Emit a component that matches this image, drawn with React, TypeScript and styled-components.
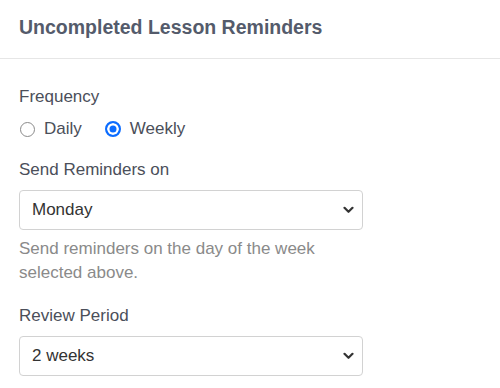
import React from "react";
import styled, { createGlobalStyle } from "styled-components";

const GlobalStyle = createGlobalStyle`
  html, body {
    margin: 0;
    padding: 0;
    background: #ffffff;
    font-family: "Liberation Sans", Arial, Helvetica, sans-serif;
  }
  * { box-sizing: border-box; }
`;

const Card = styled.div`
  width: 500px;
  height: 388px;
  background: #fff;
  overflow: hidden;
`;

const Header = styled.div`
  padding: 15px 19px 19px;
  border-bottom: 1px solid #e6e6e6;
`;

const Title = styled.h2`
  margin: 0;
  font-size: 19.5px;
  line-height: 24px;
  font-weight: 700;
  color: #545b6b;
`;

const Body = styled.div`
  padding: 26px 19px 0;
  display: flex;
  flex-direction: column;
`;

const Group = styled.div<{ $mb: number }>`
  display: flex;
  flex-direction: column;
  margin-bottom: ${(p) => p.$mb}px;
`;

const Label = styled.div`
  font-size: 17px;
  line-height: 24px;
  color: #4b4f5a;
  margin-bottom: 8px;
`;

const RadioRow = styled.div`
  display: flex;
  align-items: center;
  height: 24px;
  gap: 22px;
`;

const RadioOption = styled.label`
  display: flex;
  align-items: center;
  gap: 9px;
  font-size: 17px;
  line-height: 24px;
  color: #4b4f5a;
`;

const RadioCircle = styled.span<{ $checked?: boolean }>`
  display: inline-block;
  width: ${(p) => (p.$checked ? 16 : 15)}px;
  height: ${(p) => (p.$checked ? 16 : 15)}px;
  border-radius: 50%;
  margin-left: 1px;
  border: ${(p) => (p.$checked ? "2px solid #0b6cff" : "1px solid #8a8a8a")};
  background: ${(p) => (p.$checked ? "#0b6cff" : "#ffffff")};
  box-shadow: ${(p) => (p.$checked ? "inset 0 0 0 2.5px #ffffff" : "none")};
`;

const SelectBox = styled.div`
  width: 344px;
  height: 40px;
  border: 1px solid #d2d2d2;
  border-radius: 4px;
  background: #fff;
  display: flex;
  align-items: center;
  justify-content: space-between;
  padding: 0 8px 0 12px;
  font-size: 17px;
  color: #333333;
`;

const Help = styled.div`
  margin-top: 7px;
  width: 320px;
  font-size: 17px;
  line-height: 24px;
  color: #8a8a8a;
`;

const Chevron = () => (
  <svg width="11" height="8" viewBox="0 0 11 8" aria-hidden="true">
    <path
      d="M1.5 1.8 L5.5 5.8 L9.5 1.8"
      fill="none"
      stroke="#333"
      strokeWidth="2.2"
      strokeLinecap="round"
      strokeLinejoin="round"
    />
  </svg>
);

export default function App() {
  return (
    <Card>
      <GlobalStyle />
      <Header>
        <Title>Uncompleted Lesson Reminders</Title>
      </Header>
      <Body>
        <Group $mb={17}>
          <Label>Frequency</Label>
          <RadioRow>
            <RadioOption>
              <RadioCircle />
              Daily
            </RadioOption>
            <RadioOption>
              <RadioCircle $checked />
              Weekly
            </RadioOption>
          </RadioRow>
        </Group>
        <Group $mb={19}>
          <Label>Send Reminders on</Label>
          <SelectBox>
            <span>Monday</span>
            <Chevron />
          </SelectBox>
          <Help>Send reminders on the day of the week selected above.</Help>
        </Group>
        <Group $mb={0}>
          <Label>Review Period</Label>
          <SelectBox>
            <span>2 weeks</span>
            <Chevron />
          </SelectBox>
        </Group>
      </Body>
    </Card>
  );
}
